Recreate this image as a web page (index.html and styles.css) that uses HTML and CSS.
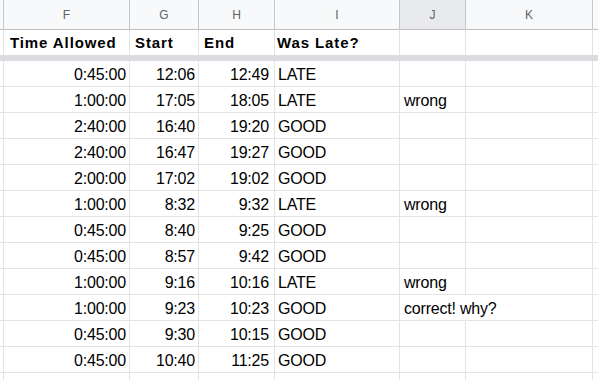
FILE: index.html
```html
<!DOCTYPE html>
<html>
<head>
<meta charset="utf-8">
<link rel="stylesheet" href="styles.css">
</head>
<body>
<div class="sheet">
  <div class="row colhead">
    <div class="c"></div>
    <div class="c">F</div>
    <div class="c">G</div>
    <div class="c">H</div>
    <div class="c">I</div>
    <div class="c sel">J</div>
    <div class="c">K</div>
    <div class="c tail"></div>
  </div>
  <div class="row titles">
    <div class="c"></div>
    <div class="c t-f">Time Allowed</div>
    <div class="c t-g">Start</div>
    <div class="c t-h">End</div>
    <div class="c t-i">Was Late?</div>
    <div class="c"></div>
    <div class="c"></div>
    <div class="c tail"></div>
  </div>
  <div class="freeze"></div>

  <div class="row data"><div class="c"></div><div class="c num">0:45:00</div><div class="c num">12:06</div><div class="c num h">12:49</div><div class="c txt">LATE</div><div class="c txt j"></div><div class="c"></div><div class="c tail"></div></div>
  <div class="row data"><div class="c"></div><div class="c num">1:00:00</div><div class="c num">17:05</div><div class="c num h">18:05</div><div class="c txt">LATE</div><div class="c txt j">wrong</div><div class="c"></div><div class="c tail"></div></div>
  <div class="row data"><div class="c"></div><div class="c num">2:40:00</div><div class="c num">16:40</div><div class="c num h">19:20</div><div class="c txt">GOOD</div><div class="c txt j"></div><div class="c"></div><div class="c tail"></div></div>
  <div class="row data"><div class="c"></div><div class="c num">2:40:00</div><div class="c num">16:47</div><div class="c num h">19:27</div><div class="c txt">GOOD</div><div class="c txt j"></div><div class="c"></div><div class="c tail"></div></div>
  <div class="row data"><div class="c"></div><div class="c num">2:00:00</div><div class="c num">17:02</div><div class="c num h">19:02</div><div class="c txt">GOOD</div><div class="c txt j"></div><div class="c"></div><div class="c tail"></div></div>
  <div class="row data"><div class="c"></div><div class="c num">1:00:00</div><div class="c num">8:32</div><div class="c num h">9:32</div><div class="c txt">LATE</div><div class="c txt j">wrong</div><div class="c"></div><div class="c tail"></div></div>
  <div class="row data"><div class="c"></div><div class="c num">0:45:00</div><div class="c num">8:40</div><div class="c num h">9:25</div><div class="c txt">GOOD</div><div class="c txt j"></div><div class="c"></div><div class="c tail"></div></div>
  <div class="row data"><div class="c"></div><div class="c num">0:45:00</div><div class="c num">8:57</div><div class="c num h">9:42</div><div class="c txt">GOOD</div><div class="c txt j"></div><div class="c"></div><div class="c tail"></div></div>
  <div class="row data"><div class="c"></div><div class="c num">1:00:00</div><div class="c num">9:16</div><div class="c num h">10:16</div><div class="c txt">LATE</div><div class="c txt j">wrong</div><div class="c"></div><div class="c tail"></div></div>
  <div class="row data"><div class="c"></div><div class="c num">1:00:00</div><div class="c num">9:23</div><div class="c num h">10:23</div><div class="c txt">GOOD</div><div class="c txt j spill">correct! why?</div><div class="c"></div><div class="c tail"></div></div>
  <div class="row data"><div class="c"></div><div class="c num">0:45:00</div><div class="c num">9:30</div><div class="c num h">10:15</div><div class="c txt">GOOD</div><div class="c txt j"></div><div class="c"></div><div class="c tail"></div></div>
  <div class="row data"><div class="c"></div><div class="c num">0:45:00</div><div class="c num">10:40</div><div class="c num h">11:25</div><div class="c txt">GOOD</div><div class="c txt j"></div><div class="c"></div><div class="c tail"></div></div>
  <div class="row data"><div class="c"></div><div class="c num"></div><div class="c num"></div><div class="c num h"></div><div class="c txt"></div><div class="c txt j"></div><div class="c"></div><div class="c tail"></div></div>
</div>
</body>
</html>
```

FILE: styles.css
```css
* { box-sizing: border-box; }

html, body {
  margin: 0;
  padding: 0;
  background: #ffffff;
  overflow: hidden;
}

.sheet {
  width: 598px;
  height: 380px;
  overflow: hidden;
  font-family: "Liberation Sans", Arial, sans-serif;
  color: #000000;
}

.row {
  display: grid;
  grid-template-columns: 4px 126px 69px 76px 125px 66px 127px 1fr;
}

.c {
  border-right: 1px solid #e2e3e3;
  white-space: nowrap;
  display: flex;
  align-items: flex-end;
  min-width: 0;
}

.c.tail { border-right: none; }

/* column letters */
.colhead { height: 30px; background: #f8f9fa; }
.colhead .c {
  border-right: 1px solid #c7c7c7;
  border-bottom: 1px solid #c0c0c0;
  align-items: center;
  justify-content: center;
  font-size: 12px;
  color: #5f6368;
  padding-top: 1px;
}
.colhead .c.tail { border-right: none; }
.colhead .c.sel { background: #e8eaed; }

/* bold titles row */
.titles { height: 25px; }
.titles .c {
  font-size: 15px;
  font-weight: bold;
  letter-spacing: 0.9px;
  line-height: 17px;
  padding-bottom: 4px;
}
.titles .t-f { padding-left: 6px; }
.titles .t-g { padding-left: 5px; }
.titles .t-h { padding-left: 5px; }
.titles .t-i { padding-left: 2px; }

.freeze { height: 6px; background: #dadce0; }

/* data rows */
.data { height: 26px; }
.data .c {
  border-bottom: 1px solid #e2e3e3;
  font-size: 16px;
  letter-spacing: -0.2px;
  line-height: 18px;
  padding-bottom: 2px;
}
.data .num { justify-content: flex-end; padding-right: 3px; }
.data .num.h { padding-right: 5px; }
.data .txt { padding-left: 3px; }
.data .txt.j { padding-left: 4px; }
.data .spill { overflow: visible; border-right-color: transparent; }
```
